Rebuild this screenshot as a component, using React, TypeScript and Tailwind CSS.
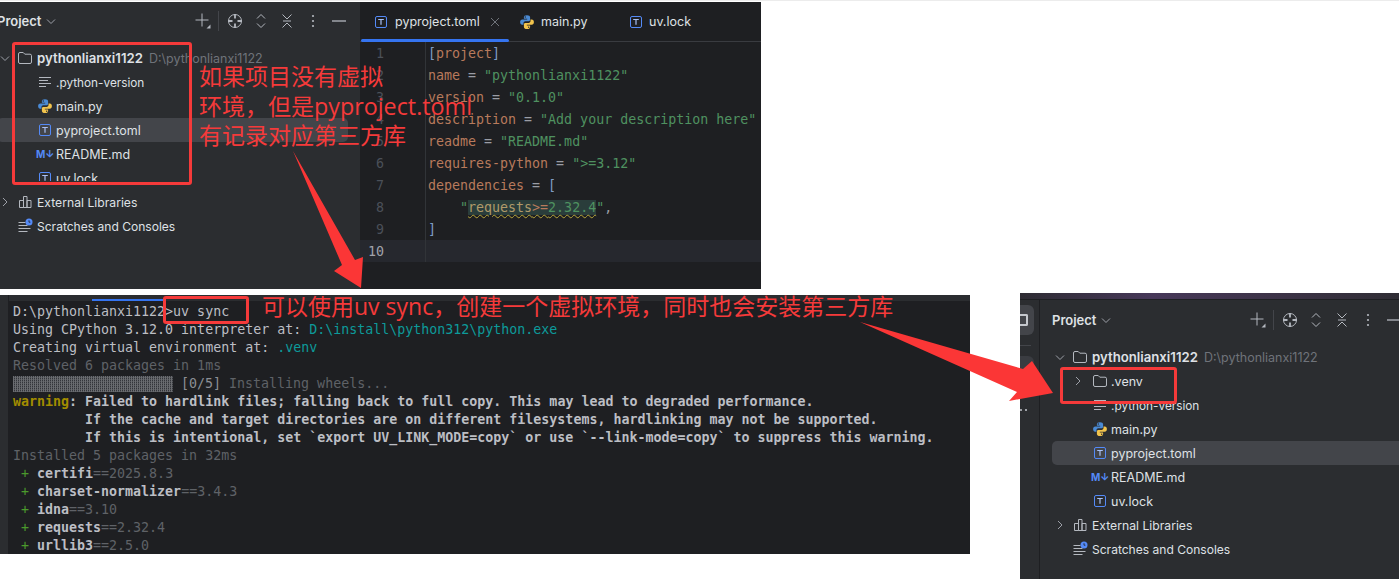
import React from "react";

const MONO = "font-['DejaVu_Sans_Mono','Liberation_Mono',monospace]";

function TIcon() {
  return (
    <svg width="16" height="16" viewBox="0 0 16 16" fill="none" className="shrink-0">
      <rect x="2.5" y="2.5" width="11" height="11" rx="1.5" stroke="#548af7" />
      <path d="M5.2 5.5h5.6M8 5.5v5.2" stroke="#a9c0f5" strokeWidth="1.2" />
    </svg>
  );
}

function PyIcon() {
  const half = "M8 1.2C5.7 1.2 4.9 2.1 4.9 3.3V4.8H8.2V5.4H3.3C2 5.4 1.1 6.4 1.1 8.1C1.1 9.7 1.9 10.8 3.2 10.8H4.5V9.1C4.5 8 5.3 7.3 6.3 7.3H9.6C10.5 7.3 11.1 6.7 11.1 5.8V3.3C11.1 2.1 10 1.2 8 1.2Z";
  return (
    <svg width="16" height="16" viewBox="0 0 16 16" className="shrink-0">
      <path d={half} fill="#4a8ad4" />
      <circle cx="6.3" cy="3" r=".7" fill="#2b2d30" />
      <g transform="rotate(180 8 8.1)">
        <path d={half} fill="#f2c44d" />
        <circle cx="6.3" cy="3" r=".7" fill="#2b2d30" />
      </g>
    </svg>
  );
}

function FolderIcon() {
  return (
    <svg width="16" height="16" viewBox="0 0 16 16" fill="none" className="shrink-0">
      <path d="M1.5 4A1.5 1.5 0 0 1 3 2.5h3.2l1.6 1.7H13A1.5 1.5 0 0 1 14.5 5.700V12A1.5 1.500 0 0 1 13 13.500H3A1.500 1.500 0 0 1 1.500 12Z" stroke="#b4b8bf" />
    </svg>
  );
}

function LinesIcon() {
  return (
    <svg width="16" height="16" viewBox="0 0 16 16" fill="none" className="shrink-0">
      <path d="M2 3.500h12M2 6.500h9M2 9.500h12M2 12.500h7" stroke="#b4b8bf" />
    </svg>
  );
}

function Chevron({ dir }: { dir: "down" | "right" }) {
  return (
    <svg width="16" height="16" viewBox="0 0 16 16" fill="none" className="shrink-0">
      <path d={dir === "down" ? "M4 6.500l4 4 4-4" : "M6 4l4 4-4 4"} stroke="#9da0a8" />
    </svg>
  );
}

function LibIcon() {
  return (
    <svg width="16" height="16" viewBox="0 0 16 16" fill="none" className="shrink-0">
      <path d="M2.500 6.500h4v7h-4zM6.500 2.500h3.500v11H6.500zM10 6.500h4v7h-4z" stroke="#b4b8bf" />
    </svg>
  );
}

function ScratchIcon() {
  return (
    <svg width="16" height="16" viewBox="0 0 16 16" fill="none" className="shrink-0">
      <path d="M1.500 4.500h7M1.500 7.500h9M1.500 10.500h12M1.500 13.500h9" stroke="#b4b8bf" />
      <circle cx="12" cy="4" r="3.500" fill="#548af7" />
      <path d="M12 2.200V4.200h1.400" stroke="#1e1f22" strokeWidth=".8" />
    </svg>
  );
}

function Toolbar() {
  const s = "#b4b8bf";
  return (
    <div className="ml-auto flex items-center shrink-0">
      <svg width="18" height="18" viewBox="0 0 18 18" fill="none">
        <path d="M8 1.500v13M1.500 8h13" stroke={s} />
        <path d="M16.500 12.500v4h-4z" fill={s} />
      </svg>
      <div className="w-px h-[20px] bg-[#43454a] ml-[6px] mr-[8px]" />
      <svg width="16" height="16" viewBox="0 0 16 16" fill="none">
        <circle cx="8" cy="8" r="6.500" stroke={s} />
        <path d="M8 1v4.500M8 10.500V15M1 8h4.500M10.500 8H15" stroke={s} strokeWidth="1.800" />
      </svg>
      <svg width="16" height="16" viewBox="0 0 16 16" fill="none" className="ml-[10px]">
        <path d="M4 5.500l4-4 4 4M4 10.500l4 4 4-4" stroke={s} />
      </svg>
      <svg width="16" height="16" viewBox="0 0 16 16" fill="none" className="ml-[10px]">
        <path d="M3.500 1.500l4.500 4.500 4.500-4.500M3.500 14.500l4.500-4.500 4.500 4.500M4 8h8" stroke={s} />
      </svg>
      <svg width="16" height="16" viewBox="0 0 16 16" className="ml-[10px]">
        <circle cx="8" cy="3" r="1.100" fill={s} />
        <circle cx="8" cy="8" r="1.100" fill={s} />
        <circle cx="8" cy="13" r="1.100" fill={s} />
      </svg>
      <svg width="16" height="16" viewBox="0 0 16 16" fill="none" className="ml-[10px]">
        <path d="M1 8h14" stroke={s} strokeWidth="1.300" />
      </svg>
    </div>
  );
}

function Row({
  indent = 0,
  chevron,
  icon,
  selected,
  children,
}: {
  indent?: 0 | 1;
  chevron?: "down" | "right";
  icon: React.ReactNode;
  selected?: boolean;
  children: React.ReactNode;
}) {
  return (
    <div className={`h-6 flex items-center rounded-[5px] whitespace-nowrap ${selected ? "bg-[#43454a]" : ""} ${indent ? "pl-[18px]" : ""}`}>
      <div className="w-4 h-4 shrink-0">{chevron && <Chevron dir={chevron} />}</div>
      <div className={`w-4 h-4 shrink-0 flex items-center justify-center ${indent ? "ml-[6px]" : "ml-[4px]"}`}>{icon}</div>
      <div className={`flex items-baseline pt-[2px] ${indent ? "ml-[3px]" : "ml-[4px]"}`}>{children}</div>
    </div>
  );
}

function ProjectTree({ venv }: { venv?: boolean }) {
  return (
    <>
      <div className="h-[38px] flex items-center pr-[1px]">
        <span className="font-semibold text-[#dfe1e5] pt-[2px]">Project</span>
        <span className="ml-[2px]"><Chevron dir="down" /></span>
        <Toolbar />
      </div>
      <div className="pt-[6px] text-[#dfe1e5] text-[12.500px]">
        <Row chevron="down" icon={<FolderIcon />}>
          <span className="font-semibold text-[13.200px]">pythonlianxi1122</span>
          <span className="ml-[6px] text-[12.500px] text-[#6f737a]">D:\pythonlianxi1122</span>
        </Row>
        {venv && (
          <Row indent={1} chevron="right" icon={<FolderIcon />}>.venv</Row>
        )}
        <Row indent={1} icon={<LinesIcon />}><span className="text-[11.800px] relative top-px">.python-version</span></Row>
        <Row indent={1} icon={<PyIcon />}>main.py</Row>
        <Row indent={1} selected icon={<TIcon />}>pyproject.toml</Row>
        <Row indent={1} icon={<span className="text-[10px] font-bold text-[#548af7] tracking-[-0.2px]">M↓</span>}>README.md</Row>
        <Row indent={1} icon={<TIcon />}>uv.lock</Row>
        <Row chevron="right" icon={<LibIcon />}><span className="text-[12.200px]">External Libraries</span></Row>
        <Row icon={<ScratchIcon />}><span className="text-[12.050px]">Scratches and Consoles</span></Row>
      </div>
    </>
  );
}

function K({ children }: { children: React.ReactNode }) {
  return <span className="text-[#b87a5c]">{children}</span>;
}
function S({ children }: { children: React.ReactNode }) {
  return <span className="text-[#4f9160]">{children}</span>;
}
function P({ children }: { children: React.ReactNode }) {
  return <span className="text-[#9a9da5]">{children}</span>;
}

const codeLines: React.ReactNode[] = [
  <><span className="text-[#7f9cc4]">[</span><K>project</K><span className="text-[#7f9cc4]">]</span></>,
  <><K>name</K><P> = </P><S>"pythonlianxi1122"</S></>,
  <><K>version</K><P> = </P><S>"0.1.0"</S></>,
  <><K>description</K><P> = </P><S>"Add your description here"</S></>,
  <><K>readme</K><P> = </P><S>"README.md"</S></>,
  <><K>requires-python</K><P> = </P><S>"&gt;=3.12"</S></>,
  <><K>dependencies</K><P> = </P><span className="text-[#7f9cc4]">[</span></>,
  <>
    {"    "}<S>"</S>
    <span className="bg-[#2a3d3b] underline decoration-wavy decoration-[#b5a33a] decoration-1 underline-offset-2">
      <span className="text-[#b09a6a]">requests</span><K>&gt;=</K><S>2.32.4</S>
    </span>
    <S>"</S><P>,</P>
  </>,
  <span className="text-[#7f9cc4]">]</span>,
  <></>,
];

function Editor() {
  return (
    <div className="w-[401px] bg-[#1e1f22] flex flex-col">
      <div className="h-[40px] flex border-b border-[#393b40] text-[#dfe1e5] text-[12.500px] shrink-0">
        <div className="relative w-[148px] ml-px pl-[12px] flex items-center">
          <TIcon />
          <span className="ml-[6px] pt-[1px]">pyproject.toml</span>
          <svg width="10" height="10" viewBox="0 0 10 10" fill="none" className="ml-[10px]">
            <path d="M1 1l8 8M9 1L1 9" stroke="#6f737a" />
          </svg>
          <div className="absolute left-0 right-0 bottom-[-1px] h-[3px] rounded-[2px] bg-[#3574f0]" />
        </div>
        <div className="w-[120px] pl-[10px] flex items-center">
          <PyIcon />
          <span className="ml-[6px] pt-[1px]">main.py</span>
        </div>
        <div className="-ml-px flex items-center">
          <TIcon />
          <span className="ml-[5px] pt-[1px]">uv.lock</span>
        </div>
      </div>
      <div className={`${MONO} text-[13.300px] leading-[24px] flex-1`}>
        {codeLines.map((line, i) => (
          <div key={i} className={`h-[22px] flex ${i === 9 ? "bg-[#26282e]" : ""}`}>
            <div className={`w-[24px] text-right shrink-0 ${i === 9 ? "text-[#a1a3ab]" : "text-[#4b5059]"}`}>{i + 1}</div>
            <div className="w-[42px] shrink-0 border-r border-[#313438]" />
            <div className="pl-[2px] whitespace-pre">{line}</div>
          </div>
        ))}
      </div>
    </div>
  );
}

function Dim({ children }: { children: React.ReactNode }) {
  return <span className="text-[#5f6267]">{children}</span>;
}
function Teal({ children }: { children: React.ReactNode }) {
  return <span className="text-[#0d9a9a]">{children}</span>;
}
function Pkg({ name, ver }: { name: string; ver: string }) {
  return (
    <>
      <span className="text-[#4b9a2c]"> + </span>
      <span className="font-bold">{name}</span>
      <Dim>{ver}</Dim>
    </>
  );
}

const termLines: React.ReactNode[] = [
  <>D:\pythonlianxi1122&gt;uv sync</>,
  <>Using CPython 3.12.0 interpreter at: <Teal>D:\install\python312\python.exe</Teal></>,
  <>Creating virtual environment at: <Teal>.venv</Teal></>,
  <Dim>Resolved 6 packages in 1ms</Dim>,
  <>
    <span className="inline-block align-middle w-[160px] h-[16px] bg-[repeating-linear-gradient(90deg,#6a6c70_0_1px,transparent_1px_2px),repeating-linear-gradient(0deg,#55575b_0_1px,#33353a_1px_2px)]" />
    {" "}<span className="text-[#8c8f95]">[0/5]</span> <Dim>Installing wheels...</Dim>
  </>,
  <span className="font-bold"><span className="text-[#a28c00]">warning</span>: Failed to hardlink files; falling back to full copy. This may lead to degraded performance.</span>,
  <span className="font-bold">         If the cache and target directories are on different filesystems, hardlinking may not be supported.</span>,
  <span className="font-bold">         If this is intentional, set `export UV_LINK_MODE=copy` or use `--link-mode=copy` to suppress this warning.</span>,
  <Dim>Installed 5 packages in 32ms</Dim>,
  <Pkg name="certifi" ver="==2025.8.3" />,
  <Pkg name="charset-normalizer" ver="==3.4.3" />,
  <Pkg name="idna" ver="==3.10" />,
  <Pkg name="requests" ver="==2.32.4" />,
  <Pkg name="urllib3" ver="==2.5.0" />,
];

function Terminal() {
  return (
    <div className="mt-[6px] w-[970px] h-[259px] bg-[#1e1f22] flex overflow-hidden">
      <div className="w-[9px] bg-[#2b2d30] border-r border-[#1e1f22] shrink-0" />
      <div className="flex-1 min-w-0">
        <div className="h-[6px] bg-[#2b2d30] relative">
          <div className="absolute left-[83px] bottom-0 w-[71px] h-[2px] bg-[#3574f0]" />
        </div>
        <div className={`${MONO} text-[13.300px] leading-[18px] text-[#bcbec4] pl-[4px] pt-[2px] whitespace-pre`}>
          {termLines.map((l, i) => (
            <div key={i} className="h-[18px]">{l}</div>
          ))}
        </div>
      </div>
    </div>
  );
}

function Note({ className, children }: { className: string; children: React.ReactNode }) {
  return (
    <div className={`absolute whitespace-nowrap font-['Open_Sans','Noto_Sans_CJK_SC',sans-serif] text-[#f53a3a] ${className}`}>
      {children}
    </div>
  );
}

export default function App() {
  return (
    <div className="relative w-[1399px] h-[579px] bg-white overflow-hidden flex border-t border-[#ececec] font-['Inter','Noto_Sans',sans-serif] text-[13px]">
      <div className="w-[970px] shrink-0 pt-px">
        <div className="w-[761px] h-[287px] flex">
          <div className="w-[360px] bg-[#2b2d30] overflow-hidden shrink-0">
            <div className="-ml-[3px] w-[351px]">
              <ProjectTree />
            </div>
          </div>
          <Editor />
        </div>
        <Terminal />
      </div>

      <div className="ml-[50px] mt-[292px] flex-1 min-w-0 h-[286px] flex flex-col bg-[#2b2d30] overflow-hidden">
        <div className="h-[7px] shrink-0 border-b border-[#1e1f22] bg-[linear-gradient(90deg,#2e2c33,#473859_35%,#3c3346_70%,#302e35)]" />
        <div className="flex flex-1 min-h-0">
          <div className="w-[20px] shrink-0 border-r border-[#1e1f22] pt-[5px]">
            <div className="w-[14px] h-[30px] bg-[#43454a] rounded-r-[6px] flex items-center">
              <div className="w-[8px] h-[12px] border-2 border-l-0 border-[#c4c7cd] rounded-r-[2px]" />
            </div>
            <div className="w-[11px] h-px bg-[#43454a] mt-[10px]" />
            <div className="w-[14px] h-[30px] bg-[#3a3c41] rounded-r-[6px] mt-[10px]" />
            <div className="flex gap-[3px] mt-[23px]">
              <div className="w-[2px] h-[2px] bg-[#c4c7cd] rounded-full" />
              <div className="w-[2px] h-[2px] bg-[#c4c7cd] rounded-full" />
            </div>
          </div>
          <div className="flex-1 min-w-0 pl-[12px] pt-px overflow-hidden">
            <div className="w-[351px]">
              <ProjectTree venv />
            </div>
          </div>
        </div>
      </div>

      {/* hides the cut-off lower part of uv.lock in the pasted screenshot */}
      <div className="absolute left-[16px] top-[180px] w-[160px] h-[12px] bg-[#2b2d30]" />

      <div className="absolute left-[12px] top-[41px] w-[180px] h-[143px] border-[3px] border-[#f53a3a] rounded-[3px]" />
      <div className="absolute left-[163px] top-[295px] w-[86px] h-[28px] border-[3px] border-[#f53a3a] rounded-[3px]" />
      <div className="absolute left-[1060px] top-[366px] w-[117px] h-[37px] border-[3px] border-[#f53a3a] rounded-[3px]" />

      <Note className="left-[199px] top-[61px] text-[23px] leading-[29.500px]">
        <div>如果项目没有虚拟</div>
        <div>环境，但是<span className="text-[23.300px]">pyproject.toml</span></div>
        <div>有记录对应第三方库</div>
      </Note>
      <Note className="left-[262px] top-[290px] leading-[30px] text-[23px]">可以使用uv sync，创建一个虚拟环境，同时也会安装第三方库</Note>

      <svg className="absolute left-0 top-[-1px] w-[1399px] h-[579px] pointer-events-none" viewBox="0 0 1399 579">
        <polygon points="293,151 355,260 363,257 361,288 334,271 342,265" fill="#fb3636" />
        <polygon points="860,322 1023,369 1032,361 1053,393 1009,401 1017,392" fill="#fb3636" />
      </svg>
    </div>
  );
}
